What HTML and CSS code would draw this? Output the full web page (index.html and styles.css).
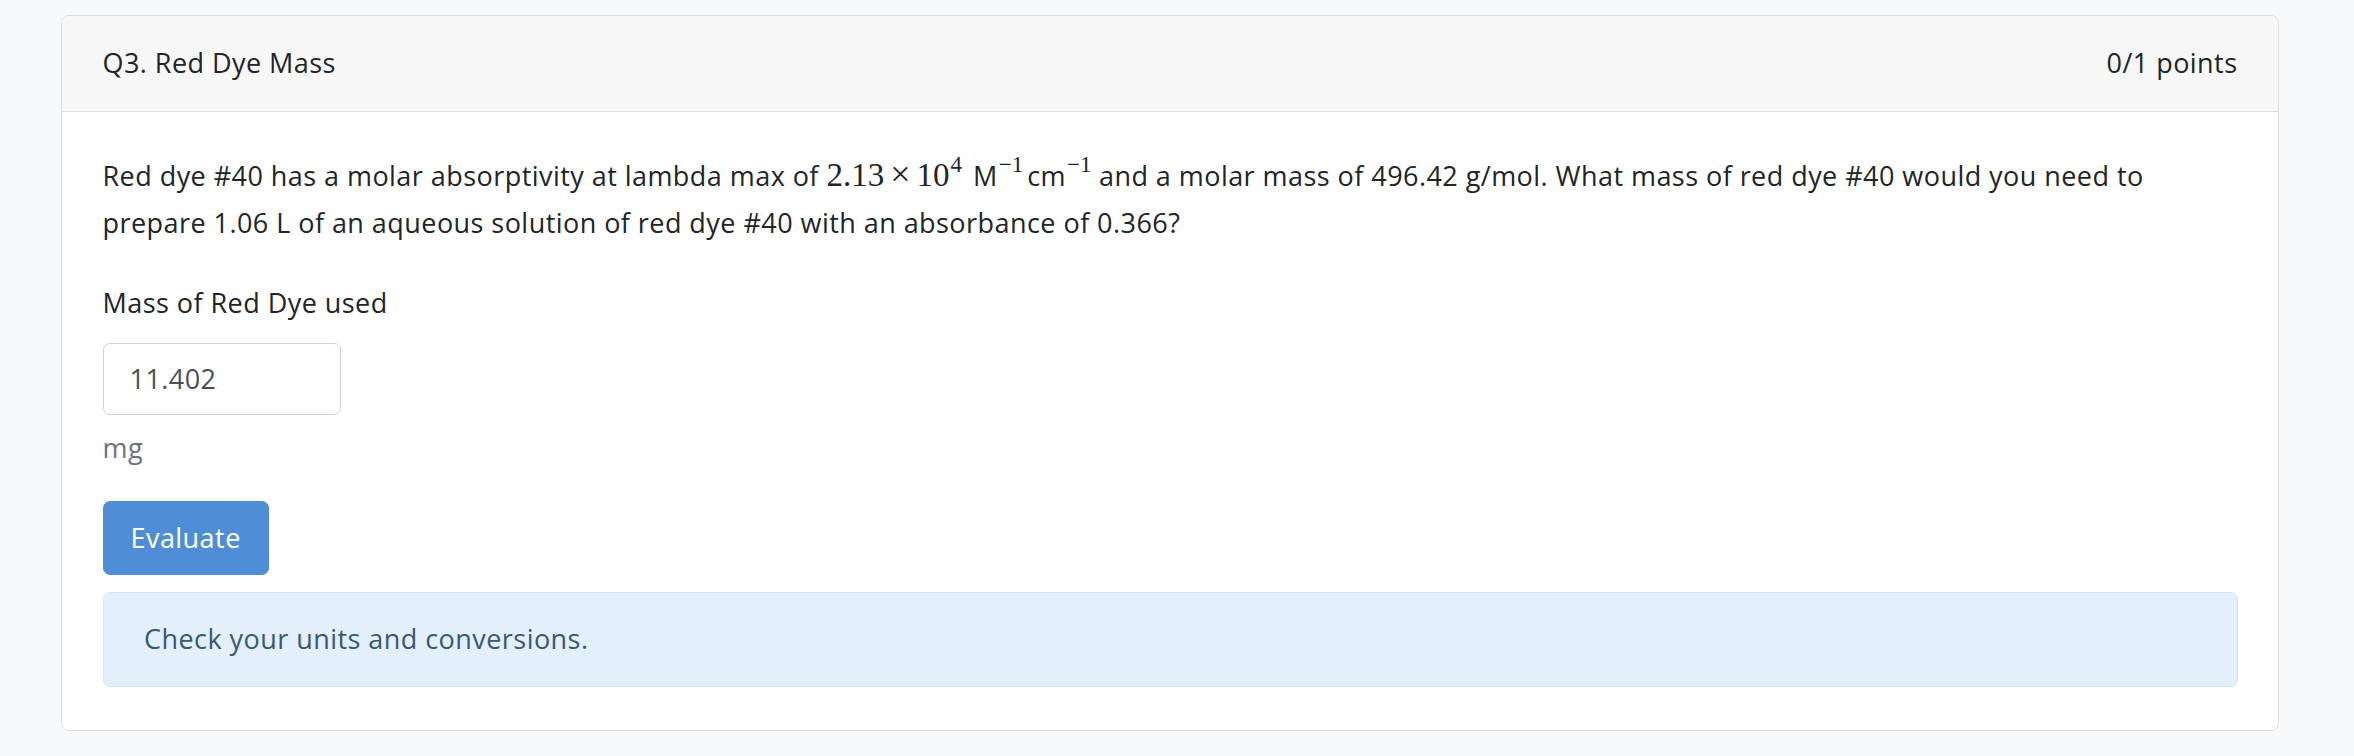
FILE: index.html
```html
<!DOCTYPE html>
<html lang="en">
<head>
<meta charset="utf-8">
<title>Q3. Red Dye Mass</title>
<link rel="stylesheet" href="styles.css">
</head>
<body>
<div class="page">
  <div class="card">
    <div class="card-header">
      <span class="title">Q3. Red Dye Mass</span>
      <span class="points">0/1 points</span>
    </div>
    <div class="card-body">
      <p class="prompt">Red dye #40 has a molar absorptivity at lambda max of <span class="math"><span class="mn">2.13</span><span class="mo">×</span><span class="mn">10</span><sup class="mexp">4</sup><span class="mtext">M</span><sup class="mexp">−1</sup><span class="mtext cm">cm</span><sup class="mexp">−1</sup></span> and a molar mass of 496.42 g/mol. What mass of red dye #40 would you need to prepare 1.06 L of an aqueous solution of red dye #40 with an absorbance of 0.366?</p>
      <label class="field-label" for="mass">Mass of Red Dye used</label>
      <input class="field-input" id="mass" type="text" value="11.402">
      <div class="unit">mg</div>
      <button class="btn-evaluate" type="button">Evaluate</button>
      <div class="alert-info">Check your units and conversions.</div>
    </div>
  </div>
</div>
</body>
</html>
```

FILE: styles.css
```css
html, body {
  margin: 0;
  padding: 0;
  background: #f8f9fb;
}
body {
  font-family: "Open Sans", "Noto Sans", "Liberation Sans", sans-serif;
  font-size: 27px;
  line-height: 40.5px;
  color: #212529;
  letter-spacing: 0.45px;
}
.page {
  padding: 15px 75px 24px 61px;
}
.card {
  background: #ffffff;
  border: 1.5px solid #dedede;
  border-radius: 8px;
  overflow: hidden;
}
.card-header {
  display: flex;
  justify-content: space-between;
  align-items: center;
  background: #f7f7f7;
  border-bottom: 1.5px solid #dcdcdc;
  padding: 27px 40.5px;
}
.card-body {
  padding: 40.5px 40.5px 43px 40.5px;
}
.prompt {
  margin: 0 0 38px;
  line-height: 45px;
}
.math {
  font-family: "Liberation Serif", "DejaVu Serif", serif;
  letter-spacing: 0;
}
.mn {
  font-size: 33px;
}
.mo {
  font-size: 36px;
  margin: 0 6px;
}
.mexp {
  font-family: "Liberation Serif", "DejaVu Serif", serif;
  font-size: 23px;
  line-height: 1;
  vertical-align: 14px;
  margin-left: 1px;
}
.mtext {
  font-family: "Open Sans", "Noto Sans", "Liberation Sans", sans-serif;
  letter-spacing: 0.45px;
  margin-left: 11px;
}
.mtext.cm {
  margin-left: 4px;
}
.field-label {
  display: block;
  margin-bottom: 19px;
}
.field-input {
  display: block;
  box-sizing: border-box;
  width: 238px;
  height: 72px;
  border: 1.5px solid #ced4da;
  border-radius: 7px;
  padding: 0 26px;
  font-family: inherit;
  font-size: 27px;
  letter-spacing: 0.45px;
  color: #495057;
  background: #ffffff;
  margin: 0;
}
.unit {
  color: #6c757d;
  margin-top: 13px;
}
.btn-evaluate {
  display: block;
  box-sizing: border-box;
  height: 74px;
  margin-top: 33px;
  padding: 0 27px;
  border: 1.5px solid #4f8ed6;
  border-radius: 7px;
  background: #4f8ed6;
  color: #ffffff;
  font-family: inherit;
  font-size: 27px;
  letter-spacing: 0.45px;
  line-height: 40.5px;
}
.alert-info {
  margin-top: 17px;
  padding: 26px 40.5px;
  background: #e3effa;
  border: 1.5px solid #d4e5f7;
  border-radius: 7px;
  color: #3a5876;
}
```
